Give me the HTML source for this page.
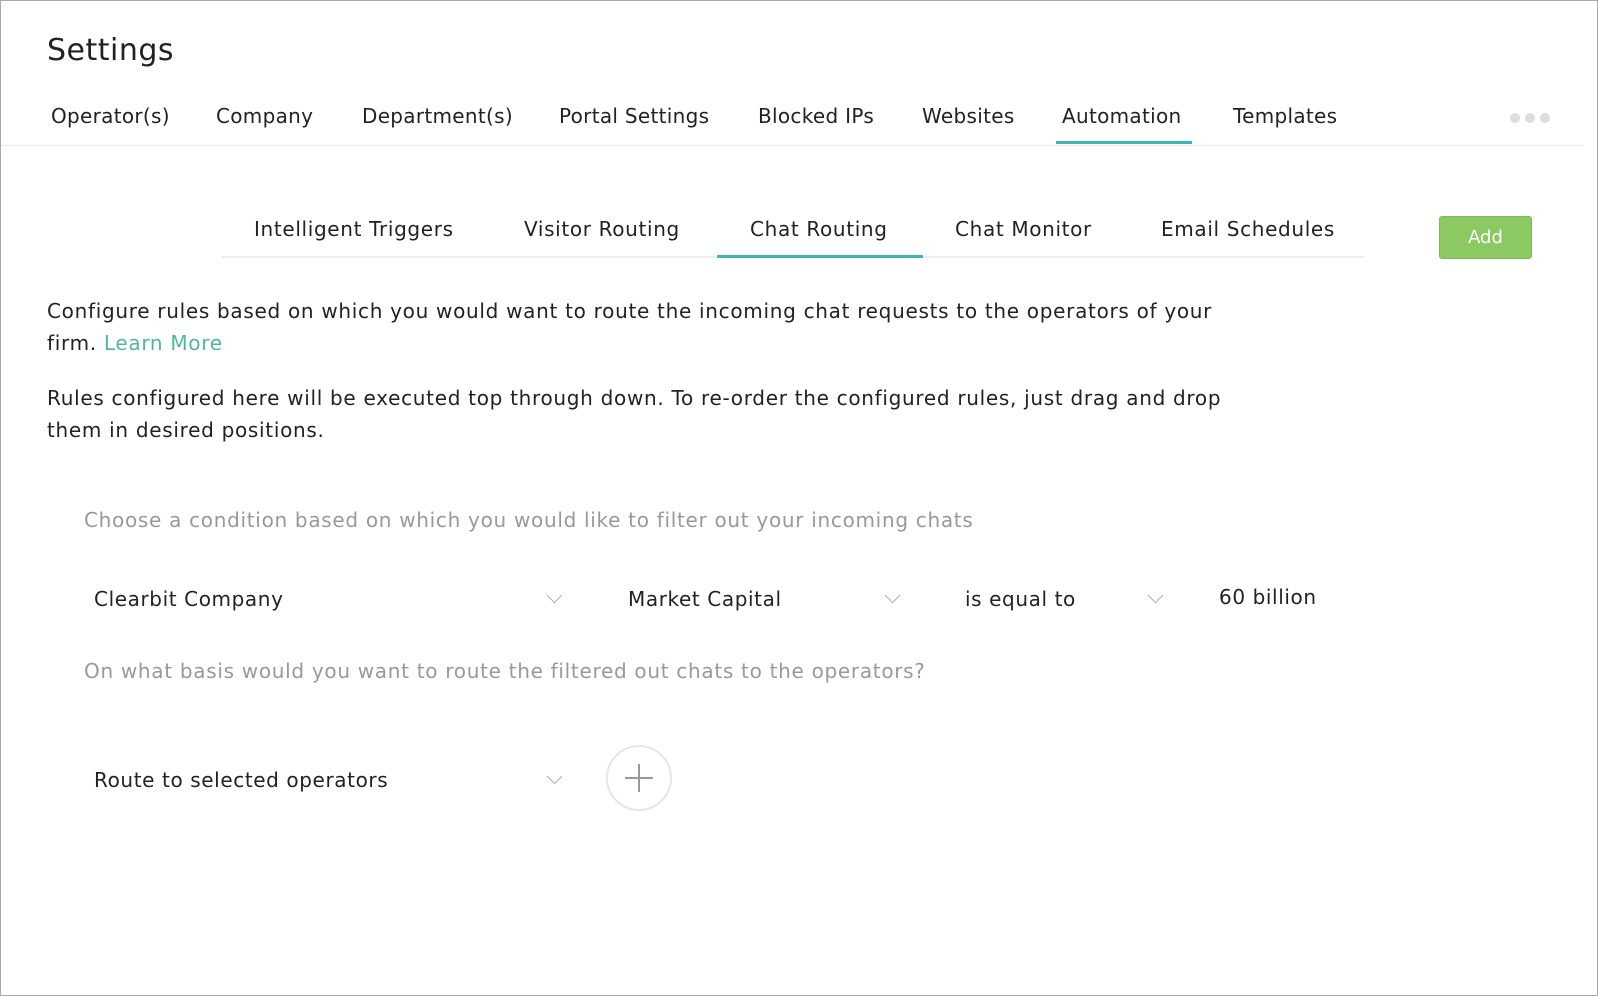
<!DOCTYPE html>
<html><head><meta charset="utf-8"><style>
*{margin:0;padding:0;box-sizing:border-box}
body{width:1598px;height:996px;background:#fff;font-family:"DejaVu Sans","Liberation Sans",sans-serif;color:#222;position:relative;overflow:hidden}
.frame{position:absolute;left:0;top:0;width:1598px;height:996px;border:1px solid #a9a9a9}
.a{position:absolute;white-space:nowrap}
.t{font-size:20px;top:104px;letter-spacing:0.3px}
.s{font-size:20px;top:217px;letter-spacing:0.65px}
.p{font-size:20px;line-height:32px;left:47px;width:1190px;white-space:normal;letter-spacing:0.7px}
.g{color:#999;font-size:20px;left:84px;letter-spacing:0.7px}
.v{font-size:20px;letter-spacing:0.6px}
.chev{position:absolute;width:11px;height:11px;border-right:1.5px solid #aaa;border-bottom:1.5px solid #aaa;transform:rotate(45deg)}
</style></head><body>
<div class="frame"></div>
<div class="a" style="left:47px;top:33px;font-size:30px;letter-spacing:0.5px">Settings</div>
<div class="a t" style="left:51px">Operator(s)</div>
<div class="a t" style="left:216px">Company</div>
<div class="a t" style="left:362px">Department(s)</div>
<div class="a t" style="left:559px">Portal Settings</div>
<div class="a t" style="left:758px">Blocked IPs</div>
<div class="a t" style="left:922px">Websites</div>
<div class="a t" style="left:1062px">Automation</div>
<div class="a t" style="left:1233px">Templates</div>
<div class="a" style="left:1056px;top:141px;width:136px;height:3px;background:#3db5b3"></div>
<div class="a" style="left:1px;top:145px;width:1583px;height:1px;background:#ececec"></div>
<div class="a" style="left:1510px;top:113px;width:10px;height:10px;border-radius:50%;background:#ddd"></div>
<div class="a" style="left:1525px;top:113px;width:10px;height:10px;border-radius:50%;background:#ddd"></div>
<div class="a" style="left:1540px;top:113px;width:10px;height:10px;border-radius:50%;background:#ddd"></div>

<div class="a s" style="left:254px">Intelligent Triggers</div>
<div class="a s" style="left:524px">Visitor Routing</div>
<div class="a s" style="left:750px">Chat Routing</div>
<div class="a s" style="left:955px">Chat Monitor</div>
<div class="a s" style="left:1161px">Email Schedules</div>
<div class="a" style="left:221px;top:256px;width:1143px;height:2px;background:#eeeeee"></div>
<div class="a" style="left:717px;top:255px;width:206px;height:3px;background:#3db5b3"></div>
<div class="a" style="left:1439px;top:216px;width:93px;height:43px;background:#8bc962;border:1px solid #7cbc56;border-radius:3px;color:#fff;font-size:18px;text-align:center;line-height:41px">Add</div>

<div class="a p" style="top:295px">Configure rules based on which you would want to route the incoming chat requests to the operators of your firm. <span style="color:#4fb89a">Learn More</span></div>
<div class="a p" style="top:382px">Rules configured here will be executed top through down. To re-order the configured rules, just drag and drop them in desired positions.</div>

<div class="a g" style="top:508px">Choose a condition based on which you would like to filter out your incoming chats</div>
<div class="a v" style="left:94px;top:587px">Clearbit Company</div>
<div class="chev" style="left:549px;top:590px"></div>
<div class="a v" style="left:628px;top:587px">Market Capital</div>
<div class="chev" style="left:887px;top:590px"></div>
<div class="a v" style="left:965px;top:587px">is equal to</div>
<div class="chev" style="left:1150px;top:590px"></div>
<div class="a v" style="left:1219px;top:585px">60 billion</div>

<div class="a g" style="top:659px">On what basis would you want to route the filtered out chats to the operators?</div>
<div class="a v" style="left:94px;top:768px">Route to selected operators</div>
<div class="chev" style="left:549px;top:771px"></div>
<div class="a" style="left:606px;top:745px;width:66px;height:66px;border-radius:50%;border:2px solid #e6e6e6"></div>
<div class="a" style="left:625px;top:777px;width:28px;height:2px;background:#999"></div>
<div class="a" style="left:638px;top:764px;width:2px;height:28px;background:#999"></div>
</body></html>
